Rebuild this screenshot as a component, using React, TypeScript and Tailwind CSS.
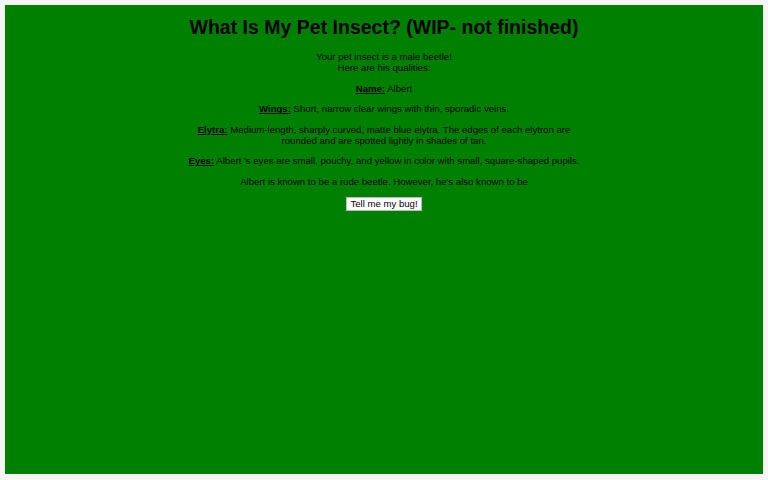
export default function App() {
  const traits = [
    { label: "Name:", text: "Albert" },
    { label: "Wings:", text: "Short, narrow clear wings with thin, sporadic veins." },
    {
      label: "Elytra:",
      text: "Medium-length, sharply curved, matte blue elytra. The edges of each elytron are rounded and are spotted lightly in shades of tan.",
    },
    {
      label: "Eyes:",
      text: "Albert 's eyes are small, pouchy, and yellow in color with small, square-shaped pupils.",
    },
  ];

  return (
    <div className="w-[768px] h-[480px] bg-[#f5f5f5] p-[5px] font-['Liberation_Sans',Arial,sans-serif] text-black">
      <main className="w-[758px] h-[469px] bg-[#008000] flex flex-col items-center pt-[11px]">
        <h1 className="text-[19.5px] leading-[22px] font-bold">
          What Is My Pet Insect? (WIP- not finished)
        </h1>

        <div className="w-[400px] mt-[13px] text-center text-[9.6px] leading-[11px] flex flex-col gap-[9.5px]">
          <p>
            Your pet insect is a male beetle!
            <br />
            Here are his qualities:
          </p>
          {traits.map((t) => (
            <p key={t.label}>
              <span className="font-bold underline">{t.label}</span> {t.text}
            </p>
          ))}
          <p>Albert is known to be a rude beetle. However, he's also known to be</p>
          <div className="flex justify-center pt-[1px]">
            <button className="bg-white border border-[#bdbdbd] px-[3px] h-[14px] leading-[12px] text-[9.6px]">
              Tell me my bug!
            </button>
          </div>
        </div>
      </main>
    </div>
  );
}
